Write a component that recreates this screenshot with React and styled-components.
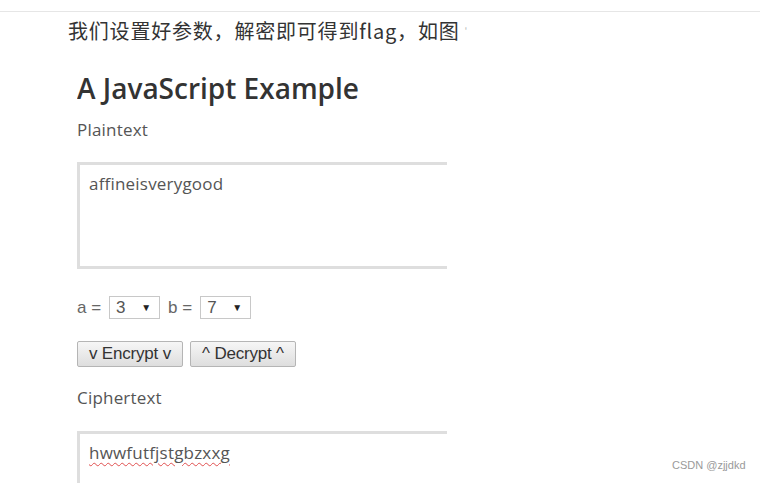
import styled, { createGlobalStyle } from 'styled-components';

const Global = createGlobalStyle`
  html, body {
    margin: 0;
    padding: 0;
    background: #fff;
  }
`;

const Page = styled.div`
  position: relative;
  width: 760px;
  height: 483px;
  overflow: hidden;
  background: #fff;
`;

const Rule = styled.div`
  margin-top: 11px;
  height: 1px;
  background: #e6e6e6;
`;

const Caption = styled.p`
  margin: 9px 0 0 68px;
  font-family: "Noto Sans CJK SC", "Noto Sans", sans-serif;
  font-size: 20px;
  line-height: 20px;
  letter-spacing: 0.8px;
  color: #333;
`;

const Tick = styled.span`
  margin-left: 5px;
  color: #bbb;
  font-size: 10px;
  vertical-align: top;
`;

const Demo = styled.section`
  margin-left: 77px;
  width: 370px;
  overflow: hidden;
  font-family: "Open Sans", sans-serif;
`;

const Heading = styled.h1`
  margin: 30px 0 0;
  font-size: 28px;
  line-height: 34px;
  font-weight: 600;
  color: #333;
  white-space: nowrap;
`;

const Label = styled.div`
  margin-top: ${(p) => p.$gap}px;
  font-size: 17px;
  line-height: 22px;
  letter-spacing: 0.2px;
  color: #555;
`;

const Field = styled.div`
  box-sizing: border-box;
  width: 420px;
  height: 107px;
  margin-top: ${(p) => p.$gap}px;
  padding: 8px 9px;
  border: 3px solid #dedede;
  border-right: none;
  font-size: 17px;
  line-height: 22px;
  letter-spacing: 0.2px;
  color: #555;
`;

const Spell = styled.span`
  text-decoration: underline wavy #e05050;
  text-decoration-thickness: 1px;
  text-underline-offset: 3px;
`;

const Row = styled.div`
  display: flex;
  align-items: center;
  gap: ${(p) => p.$gap || 6}px;
  margin-top: ${(p) => p.$top}px;
  font-family: "Liberation Sans", Arial, sans-serif;
  font-size: 17px;
  color: #666;
`;

const Select = styled.div`
  box-sizing: border-box;
  width: 51px;
  height: 23px;
  display: flex;
  align-items: center;
  justify-content: space-between;
  padding: 0 8px 0 6px;
  border: 1px solid #c8c8c8;
  background: #fff;
  color: #555;
  font-size: 17px;
`;

const Arrow = styled.span`
  font-size: 10px;
  color: #222;
`;

const Button = styled.div`
  box-sizing: border-box;
  height: 26px;
  width: ${(p) => p.$w}px;
  display: flex;
  align-items: center;
  justify-content: center;
  border: 1px solid #b5b5b5;
  border-radius: 2px;
  background: linear-gradient(#f6f6f6, #dedede);
  color: #333;
  font-size: 17px;
  letter-spacing: -0.2px;
  white-space: nowrap;
`;

const Watermark = styled.div`
  position: absolute;
  left: 672px;
  top: 459px;
  font-family: "Liberation Sans", Arial, sans-serif;
  font-size: 11px;
  color: #9a9a9a;
`;

export default function App() {
  return (
    <Page>
      <Global />
      <Rule />
      <Caption>
        我们设置好参数，解密即可得到flag，如图<Tick>'</Tick>
      </Caption>
      <Demo>
        <Heading>A JavaScript Example</Heading>
        <Label $gap={14}>Plaintext</Label>
        <Field $gap={21}>affineisverygood</Field>
        <Row $top={27} $gap={8}>
          a =<Select>3<Arrow>▼</Arrow></Select>
          b =<Select>7<Arrow>▼</Arrow></Select>
        </Row>
        <Row $top={22} $gap={7}>
          <Button $w={106}>v Encrypt v</Button>
          <Button $w={106}>^ Decrypt ^</Button>
        </Row>
        <Label $gap={20}>Ciphertext</Label>
        <Field $gap={22}><Spell>hwwfutfjstgbzxxg</Spell></Field>
      </Demo>
      <Watermark>CSDN @zjjdkd</Watermark>
    </Page>
  );
}
